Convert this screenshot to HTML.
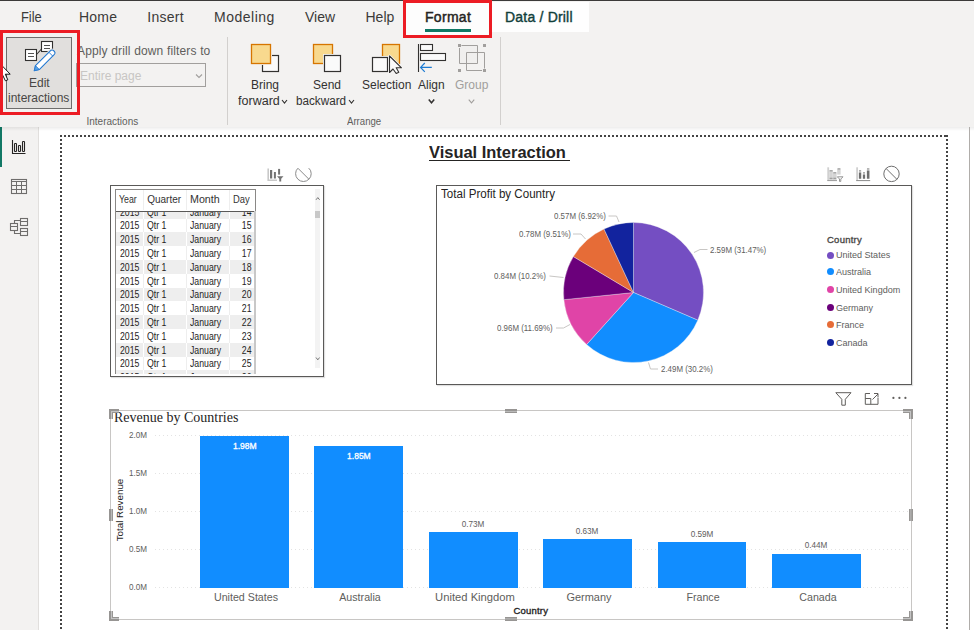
<!DOCTYPE html>
<html><head><meta charset="utf-8">
<style>
*{margin:0;padding:0;box-sizing:border-box}
html,body{width:974px;height:630px;overflow:hidden;background:#fff;font-family:"Liberation Sans",sans-serif;color:#252423}
.a{position:absolute;white-space:nowrap;line-height:1}
svg{position:absolute;left:0;top:0;overflow:visible}
</style></head><body>
<div class="a" style="left:0px;top:0px;width:974px;height:1px;background:#3b3a39;"></div>
<div class="a" style="left:0px;top:1px;width:974px;height:126px;background:#f3f2f1;"></div>
<div class="a" style="left:406px;top:2px;width:84px;height:34px;background:#fdfdfd;"></div>
<div class="a" style="left:491px;top:2px;width:98px;height:30px;background:#fefefe;"></div>
<div class="a" style="left:20.8px;top:10px;font-size:14px;color:#3b3a39;font-weight:400;font-family:'Liberation Sans';transform:scaleX(0.92);transform-origin:0 0">File</div>
<div class="a" style="left:79px;top:10px;font-size:14px;color:#3b3a39;font-weight:400;font-family:'Liberation Sans';letter-spacing:0.2px">Home</div>
<div class="a" style="left:147.2px;top:10px;font-size:14px;color:#3b3a39;font-weight:400;font-family:'Liberation Sans';letter-spacing:0.3px">Insert</div>
<div class="a" style="left:214px;top:10px;font-size:14px;color:#3b3a39;font-weight:400;font-family:'Liberation Sans';letter-spacing:0.5px">Modeling</div>
<div class="a" style="left:305px;top:10px;font-size:14px;color:#3b3a39;font-weight:400;font-family:'Liberation Sans';">View</div>
<div class="a" style="left:365.5px;top:10px;font-size:14px;color:#3b3a39;font-weight:400;font-family:'Liberation Sans';">Help</div>
<div class="a" style="left:425px;top:10px;font-size:14px;color:#252423;font-weight:400;font-family:'Liberation Sans';-webkit-text-stroke:0.45px #252423;letter-spacing:0.3px">Format</div>
<div class="a" style="left:425px;top:29px;width:46px;height:3px;background:#117865;"></div>
<div class="a" style="left:505px;top:10px;font-size:14px;color:#123f3b;font-weight:400;font-family:'Liberation Sans';-webkit-text-stroke:0.4px #123f3b;letter-spacing:0.2px">Data / Drill</div>
<div class="a" style="left:6px;top:37px;width:66px;height:72px;background:#e1dfdd;border:1px solid #6e6d6c;"></div>
<div class="a" style="left:29px;top:77px;font-size:12px;color:#484644;font-weight:400;font-family:'Liberation Sans';">Edit</div>
<div class="a" style="left:8px;top:92px;font-size:12px;color:#484644;font-weight:400;font-family:'Liberation Sans';">interactions</div>
<div class="a" style="left:77px;top:45px;font-size:12px;color:#605e5c;font-weight:400;font-family:'Liberation Sans';letter-spacing:0.15px">Apply drill down filters to</div>
<div class="a" style="left:76px;top:63px;width:130px;height:24px;background:#f3f2f1;border:1px solid #a19f9d;"></div>
<div class="a" style="left:80px;top:70px;font-size:12px;color:#c8c6c4;font-weight:400;font-family:'Liberation Sans';">Entire page</div>
<div class="a" style="left:86.5px;top:116.7px;font-size:10px;color:#605e5c;font-weight:400;font-family:'Liberation Sans';">Interactions</div>
<div class="a" style="left:227px;top:37px;width:1px;height:88px;background:#d2d0ce;"></div>
<div class="a" style="left:251px;top:79px;font-size:12px;color:#323130;font-weight:400;font-family:'Liberation Sans';">Bring</div>
<div class="a" style="left:238.3px;top:95px;font-size:12px;color:#323130;font-weight:400;font-family:'Liberation Sans';transform:scaleX(1.045);transform-origin:0 0">forward</div>
<div class="a" style="left:313px;top:79px;font-size:12px;color:#323130;font-weight:400;font-family:'Liberation Sans';">Send</div>
<div class="a" style="left:296px;top:95px;font-size:12px;color:#323130;font-weight:400;font-family:'Liberation Sans';transform:scaleX(0.975);transform-origin:0 0">backward</div>
<div class="a" style="left:362px;top:79px;font-size:12px;color:#323130;font-weight:400;font-family:'Liberation Sans';">Selection</div>
<div class="a" style="left:418px;top:79px;font-size:12px;color:#323130;font-weight:400;font-family:'Liberation Sans';">Align</div>
<div class="a" style="left:455px;top:79px;font-size:12px;color:#a19f9d;font-weight:400;font-family:'Liberation Sans';">Group</div>
<div class="a" style="left:346.8px;top:116.7px;font-size:10px;color:#605e5c;font-weight:400;font-family:'Liberation Sans';transform:scaleX(0.96);transform-origin:0 0">Arrange</div>
<div class="a" style="left:500px;top:37px;width:1px;height:88px;background:#d2d0ce;"></div>
<div class="a" style="left:0px;top:127px;width:39px;height:503px;background:#f3f2f1;"></div>
<div class="a" style="left:38px;top:127px;width:1px;height:503px;background:#e1dfdd;"></div>
<div class="a" style="left:0px;top:127px;width:1.5px;height:40px;background:#117865;"></div>
<div class="a" style="left:0px;top:127px;width:974px;height:4px;background:linear-gradient(rgba(0,0,0,0.07),rgba(0,0,0,0));"></div>
<svg width="974" height="630" style="left:0;top:0"><defs><pattern id="dh" x="0" y="0" width="4" height="2" patternUnits="userSpaceOnUse"><rect width="2" height="2" fill="#444"/></pattern><pattern id="dv" x="0" y="135" width="2" height="4" patternUnits="userSpaceOnUse"><rect width="2" height="2" fill="#444"/></pattern></defs><rect x="60" y="135" width="888" height="2" fill="url(#dh)"/><g transform="translate(60 0)"><rect x="0" y="135" width="2" height="500" fill="url(#dv)"/></g><g transform="translate(946 0)"><rect x="0" y="135" width="2" height="500" fill="url(#dv)"/></g></svg>
<div class="a" style="left:969px;top:127px;width:1px;height:503px;background:#b0adaa;"></div>
<div class="a" style="left:428.5px;top:144px;font-size:17px;color:#252423;font-weight:700;font-family:'Liberation Sans';transform:scaleX(0.968);transform-origin:0 0">Visual Interaction</div>
<div class="a" style="left:429px;top:159.5px;width:141px;height:1.5px;background:#252423;"></div>
<div class="a" style="left:110px;top:185px;width:214px;height:192px;background:#fff;border:1px solid #5a5958;box-shadow:1px 1px 1px rgba(0,0,0,0.12)"></div>
<div class="a" style="left:115px;top:189px;width:141px;height:185px;background:#fff;"></div>
<div class="a" style="left:115px;top:189px;width:141px;height:22px;background:#fff;border:1px solid #8a8886;border-bottom:none"></div>
<div class="a" style="left:115px;top:212px;width:141px;height:162px;overflow:hidden">
<div class="a" style="left:0;top:-7.2px;width:140px;height:13.8px;background:#eeeeee"></div>
<div class="a" style="left:28.0px;top:-7.2px;width:1px;height:13.8px;background:#ffffff"></div>
<div class="a" style="left:71.0px;top:-7.2px;width:1px;height:13.8px;background:#ffffff"></div>
<div class="a" style="left:114.0px;top:-7.2px;width:1px;height:13.8px;background:#ffffff"></div>
<div class="a" style="left:4.7px;top:-4.4px;font-size:10.4px;transform:scaleX(0.84);transform-origin:0 0">2015</div>
<div class="a" style="left:32.4px;top:-4.4px;font-size:10.4px;transform:scaleX(0.84);transform-origin:0 0">Qtr 1</div>
<div class="a" style="left:75.2px;top:-4.4px;font-size:10.4px;transform:scaleX(0.84);transform-origin:0 0">January</div>
<div class="a" style="left:106px;width:30.5px;text-align:right;top:-4.4px;font-size:10.4px;transform:scaleX(0.84);transform-origin:100% 0">14</div>
<div class="a" style="left:0;top:6.6px;width:140px;height:13.8px;background:#ffffff"></div>
<div class="a" style="left:28.0px;top:6.6px;width:1px;height:13.8px;background:#eeeeee"></div>
<div class="a" style="left:71.0px;top:6.6px;width:1px;height:13.8px;background:#eeeeee"></div>
<div class="a" style="left:114.0px;top:6.6px;width:1px;height:13.8px;background:#eeeeee"></div>
<div class="a" style="left:4.7px;top:9.4px;font-size:10.4px;transform:scaleX(0.84);transform-origin:0 0">2015</div>
<div class="a" style="left:32.4px;top:9.4px;font-size:10.4px;transform:scaleX(0.84);transform-origin:0 0">Qtr 1</div>
<div class="a" style="left:75.2px;top:9.4px;font-size:10.4px;transform:scaleX(0.84);transform-origin:0 0">January</div>
<div class="a" style="left:106px;width:30.5px;text-align:right;top:9.4px;font-size:10.4px;transform:scaleX(0.84);transform-origin:100% 0">15</div>
<div class="a" style="left:0;top:20.4px;width:140px;height:13.8px;background:#eeeeee"></div>
<div class="a" style="left:28.0px;top:20.4px;width:1px;height:13.8px;background:#ffffff"></div>
<div class="a" style="left:71.0px;top:20.4px;width:1px;height:13.8px;background:#ffffff"></div>
<div class="a" style="left:114.0px;top:20.4px;width:1px;height:13.8px;background:#ffffff"></div>
<div class="a" style="left:4.7px;top:23.2px;font-size:10.4px;transform:scaleX(0.84);transform-origin:0 0">2015</div>
<div class="a" style="left:32.4px;top:23.2px;font-size:10.4px;transform:scaleX(0.84);transform-origin:0 0">Qtr 1</div>
<div class="a" style="left:75.2px;top:23.2px;font-size:10.4px;transform:scaleX(0.84);transform-origin:0 0">January</div>
<div class="a" style="left:106px;width:30.5px;text-align:right;top:23.2px;font-size:10.4px;transform:scaleX(0.84);transform-origin:100% 0">16</div>
<div class="a" style="left:0;top:34.2px;width:140px;height:13.8px;background:#ffffff"></div>
<div class="a" style="left:28.0px;top:34.2px;width:1px;height:13.8px;background:#eeeeee"></div>
<div class="a" style="left:71.0px;top:34.2px;width:1px;height:13.8px;background:#eeeeee"></div>
<div class="a" style="left:114.0px;top:34.2px;width:1px;height:13.8px;background:#eeeeee"></div>
<div class="a" style="left:4.7px;top:37.0px;font-size:10.4px;transform:scaleX(0.84);transform-origin:0 0">2015</div>
<div class="a" style="left:32.4px;top:37.0px;font-size:10.4px;transform:scaleX(0.84);transform-origin:0 0">Qtr 1</div>
<div class="a" style="left:75.2px;top:37.0px;font-size:10.4px;transform:scaleX(0.84);transform-origin:0 0">January</div>
<div class="a" style="left:106px;width:30.5px;text-align:right;top:37.0px;font-size:10.4px;transform:scaleX(0.84);transform-origin:100% 0">17</div>
<div class="a" style="left:0;top:48.0px;width:140px;height:13.8px;background:#eeeeee"></div>
<div class="a" style="left:28.0px;top:48.0px;width:1px;height:13.8px;background:#ffffff"></div>
<div class="a" style="left:71.0px;top:48.0px;width:1px;height:13.8px;background:#ffffff"></div>
<div class="a" style="left:114.0px;top:48.0px;width:1px;height:13.8px;background:#ffffff"></div>
<div class="a" style="left:4.7px;top:50.8px;font-size:10.4px;transform:scaleX(0.84);transform-origin:0 0">2015</div>
<div class="a" style="left:32.4px;top:50.8px;font-size:10.4px;transform:scaleX(0.84);transform-origin:0 0">Qtr 1</div>
<div class="a" style="left:75.2px;top:50.8px;font-size:10.4px;transform:scaleX(0.84);transform-origin:0 0">January</div>
<div class="a" style="left:106px;width:30.5px;text-align:right;top:50.8px;font-size:10.4px;transform:scaleX(0.84);transform-origin:100% 0">18</div>
<div class="a" style="left:0;top:61.8px;width:140px;height:13.8px;background:#ffffff"></div>
<div class="a" style="left:28.0px;top:61.8px;width:1px;height:13.8px;background:#eeeeee"></div>
<div class="a" style="left:71.0px;top:61.8px;width:1px;height:13.8px;background:#eeeeee"></div>
<div class="a" style="left:114.0px;top:61.8px;width:1px;height:13.8px;background:#eeeeee"></div>
<div class="a" style="left:4.7px;top:64.6px;font-size:10.4px;transform:scaleX(0.84);transform-origin:0 0">2015</div>
<div class="a" style="left:32.4px;top:64.6px;font-size:10.4px;transform:scaleX(0.84);transform-origin:0 0">Qtr 1</div>
<div class="a" style="left:75.2px;top:64.6px;font-size:10.4px;transform:scaleX(0.84);transform-origin:0 0">January</div>
<div class="a" style="left:106px;width:30.5px;text-align:right;top:64.6px;font-size:10.4px;transform:scaleX(0.84);transform-origin:100% 0">19</div>
<div class="a" style="left:0;top:75.6px;width:140px;height:13.8px;background:#eeeeee"></div>
<div class="a" style="left:28.0px;top:75.6px;width:1px;height:13.8px;background:#ffffff"></div>
<div class="a" style="left:71.0px;top:75.6px;width:1px;height:13.8px;background:#ffffff"></div>
<div class="a" style="left:114.0px;top:75.6px;width:1px;height:13.8px;background:#ffffff"></div>
<div class="a" style="left:4.7px;top:78.4px;font-size:10.4px;transform:scaleX(0.84);transform-origin:0 0">2015</div>
<div class="a" style="left:32.4px;top:78.4px;font-size:10.4px;transform:scaleX(0.84);transform-origin:0 0">Qtr 1</div>
<div class="a" style="left:75.2px;top:78.4px;font-size:10.4px;transform:scaleX(0.84);transform-origin:0 0">January</div>
<div class="a" style="left:106px;width:30.5px;text-align:right;top:78.4px;font-size:10.4px;transform:scaleX(0.84);transform-origin:100% 0">20</div>
<div class="a" style="left:0;top:89.4px;width:140px;height:13.8px;background:#ffffff"></div>
<div class="a" style="left:28.0px;top:89.4px;width:1px;height:13.8px;background:#eeeeee"></div>
<div class="a" style="left:71.0px;top:89.4px;width:1px;height:13.8px;background:#eeeeee"></div>
<div class="a" style="left:114.0px;top:89.4px;width:1px;height:13.8px;background:#eeeeee"></div>
<div class="a" style="left:4.7px;top:92.2px;font-size:10.4px;transform:scaleX(0.84);transform-origin:0 0">2015</div>
<div class="a" style="left:32.4px;top:92.2px;font-size:10.4px;transform:scaleX(0.84);transform-origin:0 0">Qtr 1</div>
<div class="a" style="left:75.2px;top:92.2px;font-size:10.4px;transform:scaleX(0.84);transform-origin:0 0">January</div>
<div class="a" style="left:106px;width:30.5px;text-align:right;top:92.2px;font-size:10.4px;transform:scaleX(0.84);transform-origin:100% 0">21</div>
<div class="a" style="left:0;top:103.2px;width:140px;height:13.8px;background:#eeeeee"></div>
<div class="a" style="left:28.0px;top:103.2px;width:1px;height:13.8px;background:#ffffff"></div>
<div class="a" style="left:71.0px;top:103.2px;width:1px;height:13.8px;background:#ffffff"></div>
<div class="a" style="left:114.0px;top:103.2px;width:1px;height:13.8px;background:#ffffff"></div>
<div class="a" style="left:4.7px;top:106.0px;font-size:10.4px;transform:scaleX(0.84);transform-origin:0 0">2015</div>
<div class="a" style="left:32.4px;top:106.0px;font-size:10.4px;transform:scaleX(0.84);transform-origin:0 0">Qtr 1</div>
<div class="a" style="left:75.2px;top:106.0px;font-size:10.4px;transform:scaleX(0.84);transform-origin:0 0">January</div>
<div class="a" style="left:106px;width:30.5px;text-align:right;top:106.0px;font-size:10.4px;transform:scaleX(0.84);transform-origin:100% 0">22</div>
<div class="a" style="left:0;top:117.0px;width:140px;height:13.8px;background:#ffffff"></div>
<div class="a" style="left:28.0px;top:117.0px;width:1px;height:13.8px;background:#eeeeee"></div>
<div class="a" style="left:71.0px;top:117.0px;width:1px;height:13.8px;background:#eeeeee"></div>
<div class="a" style="left:114.0px;top:117.0px;width:1px;height:13.8px;background:#eeeeee"></div>
<div class="a" style="left:4.7px;top:119.8px;font-size:10.4px;transform:scaleX(0.84);transform-origin:0 0">2015</div>
<div class="a" style="left:32.4px;top:119.8px;font-size:10.4px;transform:scaleX(0.84);transform-origin:0 0">Qtr 1</div>
<div class="a" style="left:75.2px;top:119.8px;font-size:10.4px;transform:scaleX(0.84);transform-origin:0 0">January</div>
<div class="a" style="left:106px;width:30.5px;text-align:right;top:119.8px;font-size:10.4px;transform:scaleX(0.84);transform-origin:100% 0">23</div>
<div class="a" style="left:0;top:130.8px;width:140px;height:13.8px;background:#eeeeee"></div>
<div class="a" style="left:28.0px;top:130.8px;width:1px;height:13.8px;background:#ffffff"></div>
<div class="a" style="left:71.0px;top:130.8px;width:1px;height:13.8px;background:#ffffff"></div>
<div class="a" style="left:114.0px;top:130.8px;width:1px;height:13.8px;background:#ffffff"></div>
<div class="a" style="left:4.7px;top:133.6px;font-size:10.4px;transform:scaleX(0.84);transform-origin:0 0">2015</div>
<div class="a" style="left:32.4px;top:133.6px;font-size:10.4px;transform:scaleX(0.84);transform-origin:0 0">Qtr 1</div>
<div class="a" style="left:75.2px;top:133.6px;font-size:10.4px;transform:scaleX(0.84);transform-origin:0 0">January</div>
<div class="a" style="left:106px;width:30.5px;text-align:right;top:133.6px;font-size:10.4px;transform:scaleX(0.84);transform-origin:100% 0">24</div>
<div class="a" style="left:0;top:144.6px;width:140px;height:13.8px;background:#ffffff"></div>
<div class="a" style="left:28.0px;top:144.6px;width:1px;height:13.8px;background:#eeeeee"></div>
<div class="a" style="left:71.0px;top:144.6px;width:1px;height:13.8px;background:#eeeeee"></div>
<div class="a" style="left:114.0px;top:144.6px;width:1px;height:13.8px;background:#eeeeee"></div>
<div class="a" style="left:4.7px;top:147.4px;font-size:10.4px;transform:scaleX(0.84);transform-origin:0 0">2015</div>
<div class="a" style="left:32.4px;top:147.4px;font-size:10.4px;transform:scaleX(0.84);transform-origin:0 0">Qtr 1</div>
<div class="a" style="left:75.2px;top:147.4px;font-size:10.4px;transform:scaleX(0.84);transform-origin:0 0">January</div>
<div class="a" style="left:106px;width:30.5px;text-align:right;top:147.4px;font-size:10.4px;transform:scaleX(0.84);transform-origin:100% 0">25</div>
<div class="a" style="left:0;top:158.4px;width:140px;height:13.8px;background:#eeeeee"></div>
<div class="a" style="left:28.0px;top:158.4px;width:1px;height:13.8px;background:#ffffff"></div>
<div class="a" style="left:71.0px;top:158.4px;width:1px;height:13.8px;background:#ffffff"></div>
<div class="a" style="left:114.0px;top:158.4px;width:1px;height:13.8px;background:#ffffff"></div>
<div class="a" style="left:4.7px;top:161.2px;font-size:10.4px;transform:scaleX(0.84);transform-origin:0 0">2015</div>
<div class="a" style="left:32.4px;top:161.2px;font-size:10.4px;transform:scaleX(0.84);transform-origin:0 0">Qtr 1</div>
<div class="a" style="left:75.2px;top:161.2px;font-size:10.4px;transform:scaleX(0.84);transform-origin:0 0">January</div>
<div class="a" style="left:106px;width:30.5px;text-align:right;top:161.2px;font-size:10.4px;transform:scaleX(0.84);transform-origin:100% 0">26</div>
</div>
<div class="a" style="left:115px;top:210.5px;width:141px;height:1.5px;background:#5a5958;"></div>
<div class="a" style="left:115px;top:189px;width:1px;height:185px;background:#8a8886;"></div>
<div class="a" style="left:254px;top:211px;width:2px;height:163px;background:#c8c8c8;"></div>
<div class="a" style="left:255px;top:189px;width:1px;height:22px;background:#8a8886;"></div>
<div class="a" style="left:143px;top:190px;width:1px;height:20px;background:#eeeeee;"></div>
<div class="a" style="left:186px;top:190px;width:1px;height:20px;background:#eeeeee;"></div>
<div class="a" style="left:229px;top:190px;width:1px;height:20px;background:#eeeeee;"></div>
<div class="a" style="left:119.3px;top:195px;font-size:10px;color:#333;font-weight:400;font-family:'Liberation Sans';transform:scaleX(0.88);transform-origin:0 0">Year</div>
<div class="a" style="left:147.2px;top:195px;font-size:10px;color:#333;font-weight:400;font-family:'Liberation Sans';transform:scaleX(1.0);transform-origin:0 0">Quarter</div>
<div class="a" style="left:190.4px;top:195px;font-size:10px;color:#333;font-weight:400;font-family:'Liberation Sans';transform:scaleX(1.07);transform-origin:0 0">Month</div>
<div class="a" style="left:233.4px;top:195px;font-size:10px;color:#333;font-weight:400;font-family:'Liberation Sans';transform:scaleX(0.94);transform-origin:0 0">Day</div>
<div class="a" style="left:315px;top:189px;width:5px;height:179px;background:#f3f3f3;"></div>
<div class="a" style="left:315px;top:211px;width:5px;height:7px;background:#c8c8c8;"></div>
<svg width="974" height="630"><path d="M316,199.8 L317.8,197.6 L319.6,199.8" fill="none" stroke="#555" stroke-width="0.8"/><path d="M316,357.5 L317.8,359.8 L319.6,357.5" fill="none" stroke="#555" stroke-width="0.8"/></svg>
<div class="a" style="left:436px;top:185px;width:476px;height:200px;background:#fff;border:1px solid #5a5958;box-shadow:1px 1px 1px rgba(0,0,0,0.12)"></div>
<div class="a" style="left:441px;top:188px;font-size:12px;color:#252423;font-weight:400;font-family:'Liberation Sans';transform:scaleX(0.965);transform-origin:0 0">Total Profit by Country</div>
<svg width="974" height="630"><path d="M633.5,292.5 L633.50,222.50 A70,70 0 0 1 697.79,320.19 Z" fill="#744ec2" stroke="#f4f4f4" stroke-width="0.35"/><path d="M633.5,292.5 L697.79,320.19 A70,70 0 0 1 586.63,344.49 Z" fill="#118dff" stroke="#f4f4f4" stroke-width="0.35"/><path d="M633.5,292.5 L586.63,344.49 A70,70 0 0 1 563.87,299.67 Z" fill="#e044a7" stroke="#f4f4f4" stroke-width="0.35"/><path d="M633.5,292.5 L563.87,299.67 A70,70 0 0 1 573.40,256.61 Z" fill="#6b007b" stroke="#f4f4f4" stroke-width="0.35"/><path d="M633.5,292.5 L573.40,256.61 A70,70 0 0 1 604.01,229.01 Z" fill="#e66c37" stroke="#f4f4f4" stroke-width="0.35"/><path d="M633.5,292.5 L604.01,229.01 A70,70 0 0 1 633.50,222.50 Z" fill="#12239e" stroke="#f4f4f4" stroke-width="0.35"/></svg>
<div class="a" style="left:110px;top:410px;width:802px;height:210px;background:#fff;border:1px solid #c8c6c4;"></div>
<div class="a" style="left:114px;top:411px;font-size:14px;color:#252423;font-weight:400;font-family:'Liberation Serif';">Revenue by Countries</div>
<svg width="974" height="630"><polyline points="608.5,216 616.5,216 619,222" fill="none" stroke="#c8c6c4" stroke-width="1"/><polyline points="573,234 581,234 585.5,239" fill="none" stroke="#c8c6c4" stroke-width="1"/><polyline points="549.5,276 563.5,277.5" fill="none" stroke="#c8c6c4" stroke-width="1"/><polyline points="556,328 563.5,328 570,324.5" fill="none" stroke="#c8c6c4" stroke-width="1"/><polyline points="694,252.5 700,249.5 707.5,249.5" fill="none" stroke="#c8c6c4" stroke-width="1"/><polyline points="648.5,362.5 650.5,369 658,369" fill="none" stroke="#c8c6c4" stroke-width="1"/></svg>
<div class="a" style="left:553.5px;top:211.8px;font-size:8.5px;color:#605e5c;font-weight:400;font-family:'Liberation Sans';transform:scaleX(0.93);transform-origin:0 0">0.57M (6.92%)</div>
<div class="a" style="left:518.6px;top:229.8px;font-size:8.5px;color:#605e5c;font-weight:400;font-family:'Liberation Sans';transform:scaleX(0.93);transform-origin:0 0">0.78M (9.51%)</div>
<div class="a" style="left:494.2px;top:271.8px;font-size:8.5px;color:#605e5c;font-weight:400;font-family:'Liberation Sans';transform:scaleX(0.93);transform-origin:0 0">0.84M (10.2%)</div>
<div class="a" style="left:496.5px;top:323.6px;font-size:8.5px;color:#605e5c;font-weight:400;font-family:'Liberation Sans';transform:scaleX(0.93);transform-origin:0 0">0.96M (11.69%)</div>
<div class="a" style="left:710px;top:245.5px;font-size:8.5px;color:#605e5c;font-weight:400;font-family:'Liberation Sans';transform:scaleX(0.93);transform-origin:0 0">2.59M (31.47%)</div>
<div class="a" style="left:661.2px;top:364.8px;font-size:8.5px;color:#605e5c;font-weight:400;font-family:'Liberation Sans';transform:scaleX(0.93);transform-origin:0 0">2.49M (30.2%)</div>
<div class="a" style="left:827px;top:235px;font-size:9.5px;color:#4a4846;font-weight:400;font-family:'Liberation Sans';-webkit-text-stroke:0.35px #4a4846;letter-spacing:0.25px">Country</div>
<div class="a" style="left:827px;top:251.5px;width:7px;height:7px;border-radius:50%;background:#744ec2"></div>
<div class="a" style="left:835.8px;top:250px;font-size:9.5px;color:#605e5c;font-weight:400;font-family:'Liberation Sans';transform:scaleX(0.95);transform-origin:0 0">United States</div>
<div class="a" style="left:827px;top:268.3px;width:7px;height:7px;border-radius:50%;background:#118dff"></div>
<div class="a" style="left:835.8px;top:266.8px;font-size:9.5px;color:#605e5c;font-weight:400;font-family:'Liberation Sans';transform:scaleX(0.95);transform-origin:0 0">Australia</div>
<div class="a" style="left:827px;top:286.1px;width:7px;height:7px;border-radius:50%;background:#e044a7"></div>
<div class="a" style="left:835.8px;top:284.6px;font-size:9.5px;color:#605e5c;font-weight:400;font-family:'Liberation Sans';transform:scaleX(0.95);transform-origin:0 0">United Kingdom</div>
<div class="a" style="left:827px;top:304.1px;width:7px;height:7px;border-radius:50%;background:#6b007b"></div>
<div class="a" style="left:835.8px;top:302.6px;font-size:9.5px;color:#605e5c;font-weight:400;font-family:'Liberation Sans';transform:scaleX(0.95);transform-origin:0 0">Germany</div>
<div class="a" style="left:827px;top:321.3px;width:7px;height:7px;border-radius:50%;background:#e66c37"></div>
<div class="a" style="left:835.8px;top:319.8px;font-size:9.5px;color:#605e5c;font-weight:400;font-family:'Liberation Sans';transform:scaleX(0.95);transform-origin:0 0">France</div>
<div class="a" style="left:827px;top:339.1px;width:7px;height:7px;border-radius:50%;background:#12239e"></div>
<div class="a" style="left:835.8px;top:337.6px;font-size:9.5px;color:#605e5c;font-weight:400;font-family:'Liberation Sans';transform:scaleX(0.95);transform-origin:0 0">Canada</div>
<div class="a" style="left:129px;top:430.5px;font-size:9px;color:#605e5c;font-weight:400;font-family:'Liberation Sans';transform:scaleX(0.9);transform-origin:0 0">2.0M</div>
<div class="a" style="left:129px;top:468.5px;font-size:9px;color:#605e5c;font-weight:400;font-family:'Liberation Sans';transform:scaleX(0.9);transform-origin:0 0">1.5M</div>
<div class="a" style="left:129px;top:506.5px;font-size:9px;color:#605e5c;font-weight:400;font-family:'Liberation Sans';transform:scaleX(0.9);transform-origin:0 0">1.0M</div>
<div class="a" style="left:129px;top:544.5px;font-size:9px;color:#605e5c;font-weight:400;font-family:'Liberation Sans';transform:scaleX(0.9);transform-origin:0 0">0.5M</div>
<div class="a" style="left:129px;top:582.5px;font-size:9px;color:#605e5c;font-weight:400;font-family:'Liberation Sans';transform:scaleX(0.9);transform-origin:0 0">0.0M</div>
<svg width="974" height="630"><line x1="155" y1="435.5" x2="910" y2="435.5" stroke="#e3e3e3" stroke-width="1" stroke-dasharray="1 3"/><line x1="155" y1="473.5" x2="910" y2="473.5" stroke="#e3e3e3" stroke-width="1" stroke-dasharray="1 3"/><line x1="155" y1="511.5" x2="910" y2="511.5" stroke="#e3e3e3" stroke-width="1" stroke-dasharray="1 3"/><line x1="155" y1="549.5" x2="910" y2="549.5" stroke="#e3e3e3" stroke-width="1" stroke-dasharray="1 3"/><line x1="155" y1="587.5" x2="910" y2="587.5" stroke="#e3e3e3" stroke-width="1" stroke-dasharray="1 3"/></svg>
<div class="a" style="left:200px;top:436px;width:88.5px;height:151.5px;background:#118dff;"></div>
<div class="a" style="left:214.8px;width:60px;text-align:center;top:442px;font-size:8.5px;color:#fff;-webkit-text-stroke:0.3px #fff">1.98M</div>
<div class="a" style="left:195.7px;width:100px;text-align:center;top:592px;font-size:11px;color:#605e5c;transform:scaleX(0.97)">United States</div>
<div class="a" style="left:314px;top:446px;width:88.5px;height:141.5px;background:#118dff;"></div>
<div class="a" style="left:328.9px;width:60px;text-align:center;top:452px;font-size:8.5px;color:#fff;-webkit-text-stroke:0.3px #fff">1.85M</div>
<div class="a" style="left:309.6px;width:100px;text-align:center;top:592px;font-size:11px;color:#605e5c;transform:scaleX(0.97)">Australia</div>
<div class="a" style="left:429px;top:532px;width:88.5px;height:55.5px;background:#118dff;"></div>
<div class="a" style="left:443.25px;width:60px;text-align:center;top:520px;font-size:8.5px;color:#605e5c;transform:scaleX(0.96)">0.73M</div>
<div class="a" style="left:424.6px;width:100px;text-align:center;top:592px;font-size:11px;color:#605e5c;transform:scaleX(1.02)">United Kingdom</div>
<div class="a" style="left:543px;top:539px;width:88.5px;height:48.5px;background:#118dff;"></div>
<div class="a" style="left:557.25px;width:60px;text-align:center;top:527px;font-size:8.5px;color:#605e5c;transform:scaleX(0.96)">0.63M</div>
<div class="a" style="left:538.6px;width:100px;text-align:center;top:592px;font-size:11px;color:#605e5c;transform:scaleX(0.995)">Germany</div>
<div class="a" style="left:657.5px;top:542px;width:88.5px;height:45.5px;background:#118dff;"></div>
<div class="a" style="left:671.75px;width:60px;text-align:center;top:530px;font-size:8.5px;color:#605e5c;transform:scaleX(0.96)">0.59M</div>
<div class="a" style="left:653.1px;width:100px;text-align:center;top:592px;font-size:11px;color:#605e5c;transform:scaleX(0.97)">France</div>
<div class="a" style="left:772px;top:553.5px;width:88.5px;height:34.0px;background:#118dff;"></div>
<div class="a" style="left:786.25px;width:60px;text-align:center;top:540.5px;font-size:8.5px;color:#605e5c;transform:scaleX(0.96)">0.44M</div>
<div class="a" style="left:767.6px;width:100px;text-align:center;top:592px;font-size:11px;color:#605e5c;transform:scaleX(0.97)">Canada</div>
<div class="a" style="left:513.5px;top:606px;font-size:9.5px;color:#252423;font-weight:400;font-family:'Liberation Sans';-webkit-text-stroke:0.35px #252423;letter-spacing:0.2px">Country</div>
<div class="a" style="left:80.2px;top:505.3px;width:80px;height:10px;text-align:center;font-size:9.5px;color:#252423;transform:rotate(-90deg) scaleX(1.03);transform-origin:40px 5px">Total Revenue</div>
<svg width="974" height="630"><rect x="25.5" y="49.5" width="11" height="11" fill="#fff" stroke="#323130" stroke-width="1.1"/><line x1="28" y1="53.5" x2="34" y2="53.5" stroke="#555" stroke-width="1"/><line x1="28" y1="56.5" x2="34" y2="56.5" stroke="#555" stroke-width="1"/><rect x="41.5" y="41.5" width="11" height="10" fill="#fff" stroke="#323130" stroke-width="1.1"/><line x1="44" y1="45.5" x2="50" y2="45.5" stroke="#555" stroke-width="1"/><line x1="44" y1="48.5" x2="50" y2="48.5" stroke="#555" stroke-width="1"/><line x1="36.5" y1="54.5" x2="41.5" y2="49" stroke="#323130" stroke-width="1.1"/><g transform="translate(34.2 70.8) rotate(-45)"><path d="M0,0 L4.5,-2.7 L25.5,-2.7 Q28,-2.7 28,0 Q28,2.7 25.5,2.7 L4.5,2.7 Z" fill="#e1dfdd" stroke="#e4e2e0" stroke-width="3" stroke-linejoin="round"/><path d="M0,0 L4.5,-2.7 L25.5,-2.7 Q28,-2.7 28,0 Q28,2.7 25.5,2.7 L4.5,2.7 Z" fill="#fff" stroke="#2378d0" stroke-width="1.1" stroke-linejoin="round"/><path d="M0.3,0 L4.5,-2.7 L4.5,2.7 Z" fill="#5ea8e8" stroke="#2b7cd3" stroke-width="0.9"/><line x1="23.5" y1="-2.7" x2="23.5" y2="2.7" stroke="#2b7cd3" stroke-width="0.9"/></g><path d="M-1,62.5 L-1,78.5 L2.6,75 L5.4,80.8 L7.8,79.8 L5.3,74.2 L10.2,74.2 Z" fill="#fff" stroke="#000" stroke-width="0.9" stroke-linejoin="round"/><rect x="262.5" y="55.5" width="16" height="16" fill="#fafafa" stroke="#323130" stroke-width="1.2"/><rect x="250" y="43" width="22" height="22" fill="#f3f2f1"/><rect x="251.5" y="44.5" width="19" height="19" fill="#f8d98e" stroke="#d67500" stroke-width="1.3"/><rect x="313.5" y="44.5" width="19" height="19" fill="#f8d98e" stroke="#d67500" stroke-width="1.3"/><rect x="323" y="54" width="19" height="19" fill="#f3f2f1"/><rect x="324.5" y="55.5" width="16" height="16" fill="#fafafa" stroke="#323130" stroke-width="1.2"/><rect x="382.5" y="44.5" width="17" height="19" fill="#f8d98e" stroke="#d67500" stroke-width="1.3"/><rect x="371" y="56" width="19" height="17" fill="#f3f2f1"/><rect x="372.5" y="57.5" width="15" height="14" fill="#fafafa" stroke="#323130" stroke-width="1.2"/><path d="M389.5,56 L389.5,72.5 L393,69 L396.2,73.5 L398.8,72.2 L396.2,67.8 L401.5,67.8 Z" fill="none" stroke="#f7f6f5" stroke-width="2.6" stroke-linejoin="round"/><path d="M389.5,56 L389.5,72.5 L393,69 L396.2,73.5 L398.8,72.2 L396.2,67.8 L401.5,67.8 Z" fill="#fafafa" stroke="#323130" stroke-width="1.1" stroke-linejoin="round"/><line x1="418.5" y1="44" x2="418.5" y2="72" stroke="#323130" stroke-width="1.1"/><rect x="420.5" y="44.5" width="12" height="6" fill="#fafafa" stroke="#323130" stroke-width="1.1"/><rect x="420.5" y="53.5" width="25" height="7" fill="#fafafa" stroke="#323130" stroke-width="1.1"/><path d="M431.8,67.4 L421,67.4 M424.8,63 L420.6,67.4 L424.8,71.8" fill="none" stroke="#1c7bd3" stroke-width="1.2"/><path d="M461.5,45.5 L477.5,45.5 L477.5,63.5 L459.5,63.5 L459.5,48" fill="#f0efee" stroke="#a19f9d" stroke-width="1"/><path d="M466.5,52.5 L484.5,52.5 L484.5,68.5 M482,70.5 L466.5,70.5 L466.5,52.5" fill="none" stroke="#a19f9d" stroke-width="1"/><rect x="458" y="44" width="3" height="3" fill="#a19f9d"/><rect x="483" y="44" width="3" height="3" fill="#a19f9d"/><rect x="458" y="69" width="3" height="3" fill="#a19f9d"/><rect x="483" y="69" width="3" height="3" fill="#a19f9d"/><path d="M282.0,100.0 L284.5,103.19999999999999 L287.0,100.0" fill="none" stroke="#323130" stroke-width="1.1"/><path d="M349.0,100.0 L351.5,103.19999999999999 L354.0,100.0" fill="none" stroke="#323130" stroke-width="1.1"/><path d="M428.75,99.60000000000001 L431.5,102.8 L434.25,99.60000000000001" fill="none" stroke="#323130" stroke-width="1.5"/><path d="M468.75,99.60000000000001 L471.5,102.8 L474.25,99.60000000000001" fill="none" stroke="#a19f9d" stroke-width="1.1"/><path d="M196.0,74.5 L199,77.5 L202.0,74.5" fill="none" stroke="#a19f9d" stroke-width="1.1"/><path d="M12.5,140 L12.5,153.5 L25.5,153.5" fill="none" stroke="#252423" stroke-width="1.1"/><rect x="14.5" y="143.5" width="2" height="8" rx="0.6" fill="none" stroke="#252423" stroke-width="1.1"/><rect x="18.5" y="145.5" width="2" height="6" rx="0.6" fill="none" stroke="#252423" stroke-width="1.1"/><rect x="22.5" y="141.5" width="2" height="10" rx="0.6" fill="none" stroke="#252423" stroke-width="1.1"/><rect x="11.5" y="179.5" width="15" height="14" fill="none" stroke="#6e6d6c" stroke-width="1.1"/><line x1="11.5" y1="181.5" x2="26.5" y2="181.5" stroke="#6e6d6c" stroke-width="1"/><line x1="11.5" y1="185.5" x2="26.5" y2="185.5" stroke="#6e6d6c" stroke-width="1"/><line x1="11.5" y1="189.5" x2="26.5" y2="189.5" stroke="#6e6d6c" stroke-width="1"/><line x1="16.5" y1="182" x2="16.5" y2="193.5" stroke="#6e6d6c" stroke-width="1"/><line x1="21.5" y1="182" x2="21.5" y2="193.5" stroke="#6e6d6c" stroke-width="1"/><rect x="10.5" y="223.5" width="7" height="7" fill="none" stroke="#6e6d6c" stroke-width="1.1"/><line x1="10.5" y1="226.5" x2="17.5" y2="226.5" stroke="#6e6d6c" stroke-width="1"/><rect x="20.5" y="218.5" width="7" height="7" fill="none" stroke="#6e6d6c" stroke-width="1.1"/><line x1="20.5" y1="221.5" x2="27.5" y2="221.5" stroke="#6e6d6c" stroke-width="1"/><rect x="20.5" y="228.5" width="7" height="7" fill="none" stroke="#6e6d6c" stroke-width="1.1"/><line x1="20.5" y1="231.5" x2="27.5" y2="231.5" stroke="#6e6d6c" stroke-width="1"/><path d="M14.5,223.5 L14.5,220.5 L20.5,220.5 M14.5,230.5 L14.5,233.5 L20.5,233.5" fill="none" stroke="#6e6d6c" stroke-width="1.1"/><path d="M268.2,168.6 L268.2,180.3 L277,180.3" fill="none" stroke="#c8c8c8" stroke-width="1.6"/><rect x="270" y="170" width="2.2" height="8.5" fill="#737373"/><rect x="273.9" y="172" width="2" height="6.5" fill="#737373"/><rect x="278.1" y="168.9" width="2" height="5.7" fill="#737373"/><path d="M277,176.2 L283.5,176.2 L281.2,178.8 L281.2,181.6 L279.3,181.6 L279.3,178.8 Z" fill="#737373"/><defs><clipPath id="cc"><rect x="280" y="168.2" width="40" height="20"/></clipPath></defs><g clip-path="url(#cc)"><circle cx="303.4" cy="173.7" r="7.8" fill="none" stroke="#8a8a8a" stroke-width="1"/><line x1="297.9" y1="168.2" x2="308.8" y2="179.1" stroke="#8a8a8a" stroke-width="1"/></g><rect x="827.3" y="167.3" width="1.8" height="13.6" fill="#d0d0d0"/><rect x="829.2" y="170.3" width="3.6" height="10" fill="#d4d4d4"/><rect x="832.8" y="172.3" width="3.8" height="8" fill="#d4d4d4"/><rect x="837.2" y="168.4" width="3.4" height="6.2" fill="#d4d4d4"/><path d="M829.6,170.8 L832.6,170.8 M833.4,172.8 L836.2,172.8 M837.7,168.9 L840.3,168.9 M829.6,178.3 L832.6,178.3 M833.4,178.3 L836.2,178.3" stroke="#8a8a8a" stroke-width="0.9"/><path d="M827.3,180.6 L837,180.6" stroke="#9a9a9a" stroke-width="1"/><path d="M837.3,176.8 L843,176.8 L840.8,179 L840.8,181.4 L839.5,181.4 L839.5,179 Z" fill="#fff" stroke="#8a8a8a" stroke-width="0.9"/><rect x="856.2" y="167.3" width="1.8" height="13.4" fill="#d0d0d0"/><path d="M856.2,180.6 L870.2,180.6" stroke="#8a8a8a" stroke-width="1"/><rect x="858.9" y="170.3" width="2.3" height="8.4" fill="#d8d8d8"/><rect x="858.9" y="172.6" width="2.3" height="6.1" fill="#6e6e6e"/><rect x="862.9" y="172.3" width="2.2" height="6.4" fill="#d8d8d8"/><rect x="862.9" y="174.6" width="2.2" height="4.1" fill="#6e6e6e"/><rect x="866.9" y="168.4" width="2.5" height="10.3" fill="#d8d8d8"/><rect x="866.9" y="170.6" width="2.5" height="8.1" fill="#6e6e6e"/><path d="M859,170.8 L861.1,170.8 M863,172.8 L865,172.8 M867,168.9 L869.3,168.9" stroke="#8a8a8a" stroke-width="0.9"/><circle cx="891.5" cy="173.9" r="7.7" fill="none" stroke="#6e6e6e" stroke-width="1"/><line x1="886.1" y1="168.5" x2="896.9" y2="179.3" stroke="#6e6e6e" stroke-width="1"/><path d="M835.8,392.7 L851,392.7 L845.3,399.3 L845.3,405.2 L841.8,405.2 L841.8,399.3 Z" fill="none" stroke="#605e5c" stroke-width="1" stroke-linejoin="round"/><path d="M870,393.5 L865.3,393.5 L865.3,404.3 L878,404.3 L878,398" fill="none" stroke="#605e5c" stroke-width="1"/><path d="M865.3,398.5 L870.8,398.5 L870.8,404.3 M872.5,399.5 L878,394 M874,393.5 L878,393.5 L878,397.5" fill="none" stroke="#605e5c" stroke-width="1"/><circle cx="893.4" cy="397.9" r="1.1" fill="#605e5c"/><circle cx="899.4" cy="397.9" r="1.1" fill="#605e5c"/><circle cx="905.4" cy="397.9" r="1.1" fill="#605e5c"/><rect x="109" y="409" width="10" height="4" fill="#979593"/><rect x="109" y="409" width="4" height="10" fill="#979593"/><rect x="903" y="409" width="10" height="4" fill="#979593"/><rect x="909" y="409" width="4" height="10" fill="#979593"/><rect x="109" y="617" width="10" height="4" fill="#979593"/><rect x="109" y="611" width="4" height="10" fill="#979593"/><rect x="903" y="617" width="10" height="4" fill="#979593"/><rect x="909" y="611" width="4" height="10" fill="#979593"/><rect x="505" y="409" width="12" height="4" fill="#979593"/><rect x="505" y="617" width="12" height="4" fill="#979593"/><rect x="109" y="509" width="4" height="12" fill="#979593"/><rect x="909" y="509" width="4" height="12" fill="#979593"/><rect x="111" y="411" width="1" height="8" fill="#c4c4c4"/><rect x="111" y="411" width="8" height="1" fill="#c4c4c4"/><rect x="903" y="411" width="8" height="1" fill="#c4c4c4"/><rect x="910" y="411" width="1" height="8" fill="#c4c4c4"/><rect x="111" y="611" width="1" height="8" fill="#c4c4c4"/><rect x="111" y="618" width="8" height="1" fill="#c4c4c4"/><rect x="903" y="618" width="8" height="1" fill="#c4c4c4"/><rect x="910" y="611" width="1" height="8" fill="#c4c4c4"/><rect x="505" y="411" width="12" height="0.8" fill="#c4c4c4"/><rect x="505" y="618.5" width="12" height="0.8" fill="#c4c4c4"/><rect x="111" y="509" width="0.8" height="12" fill="#c4c4c4"/><rect x="910.5" y="509" width="0.8" height="12" fill="#c4c4c4"/></svg>
<div class="a" style="left:0px;top:30px;width:80px;height:85px;border:3px solid #ec1c24;"></div>
<div class="a" style="left:403px;top:0px;width:89px;height:38px;border:3px solid #ec1c24;"></div>
</body></html>
